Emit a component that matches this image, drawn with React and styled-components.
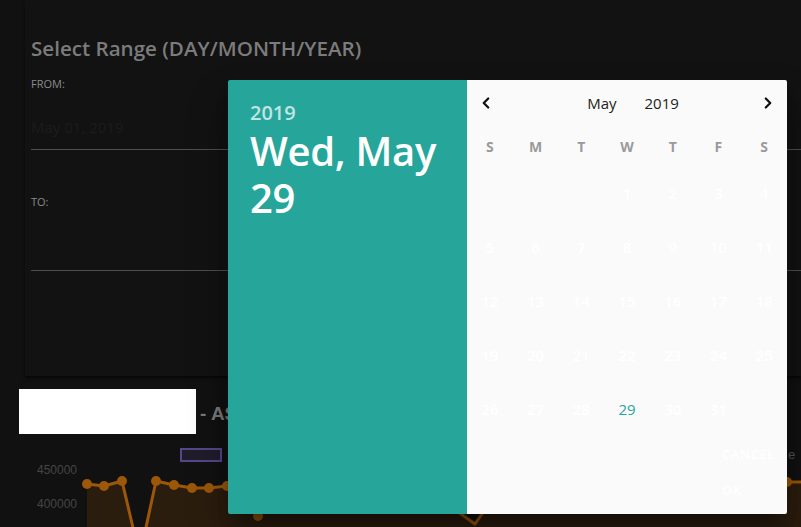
import React from 'react'
import styled, { createGlobalStyle } from 'styled-components'
import { ChevronLeft, ChevronRight } from 'lucide-react'

const font = `"Open Sans", "Noto Sans", sans-serif`

const GlobalStyle = createGlobalStyle`
  html, body {
    margin: 0;
    padding: 0;
    background: #111111;
    overflow: hidden;
  }
  body {
    font-family: ${font};
    width: 801px;
    height: 527px;
  }
`

const Page = styled.div`
  position: relative;
  width: 801px;
  height: 527px;
  overflow: hidden;
  background: #111111;
`

const FormCard = styled.section`
  margin-left: 25px;
  height: 376px;
  box-sizing: border-box;
  padding: 35px 0 0 6px;
  background: #121212;
  box-shadow: 0 2px 3px rgba(0, 0, 0, 0.6);
`

const Title = styled.h2`
  margin: 0 0 16px;
  font-size: 20.6px;
  line-height: 26px;
  font-weight: 600;
  color: #7c7c7c;
`

const Field = styled.div`
  display: flex;
  flex-direction: column;
  margin-bottom: ${({ gap }) => gap}px;
`

const Label = styled.label`
  font-size: 11px;
  line-height: 14px;
  color: #8a8a8a;
`

const Input = styled.div`
  height: ${({ h }) => h}px;
  box-sizing: border-box;
  display: flex;
  align-items: flex-end;
  padding-bottom: 12px;
  font-size: 15px;
  color: #1c1c1c;
  border-bottom: 1px solid #4e4e4e;
`

const ChartSection = styled.section`
  display: flex;
  flex-direction: column;
  padding-top: 13px;
`

const ChartHeading = styled.div`
  display: flex;
  align-items: center;
  gap: 4px;
  padding-left: 19px;
`

const Redacted = styled.div`
  width: 177px;
  height: 45px;
  background: #ffffff;
`

const HeadingText = styled.span`
  font-family: "Liberation Sans", Arial, sans-serif;
  font-weight: 700;
  font-size: 19px;
  color: #7a7a7a;
  padding-top: 4px;
`

const ChartSvg = styled.svg`
  display: block;
  margin-top: 6px;
`

const Dialog = styled.div`
  position: absolute;
  top: 80px;
  left: 228px;
  width: 559px;
  height: 434px;
  display: flex;
  border-radius: 2px;
  overflow: hidden;
  box-shadow: 0 11px 15px -7px rgba(0, 0, 0, 0.4), 0 24px 38px 3px rgba(0, 0, 0, 0.3);
`

const Toolbar = styled.div`
  width: 239px;
  background: #26a69a;
  box-sizing: border-box;
  padding: 19px 22px;
  display: flex;
  flex-direction: column;
`

const ToolbarYear = styled.div`
  font-size: 20px;
  line-height: 28px;
  font-weight: 600;
  color: rgba(255, 255, 255, 0.72);
`

const ToolbarDate = styled.div`
  font-size: 40px;
  line-height: 47px;
  font-weight: 600;
  color: #ffffff;
  letter-spacing: -0.3px;
`

const CalendarPanel = styled.div`
  width: 320px;
  background: #fafafa;
  display: flex;
  flex-direction: column;
`

const Header = styled.div`
  display: flex;
  align-items: center;
  justify-content: space-between;
  height: 30px;
  margin-top: 8px;
  padding: 0 10px 0 10px;
`

const ArrowButton = styled.button`
  border: 0;
  background: none;
  padding: 0;
  width: 18px;
  height: 18px;
  display: flex;
  align-items: center;
  justify-content: center;
  color: #111;
`

const MonthLabel = styled.div`
  display: flex;
  gap: 28px;
  font-size: 15px;
  color: #222;
  padding-left: 12px;
`

const Grid = styled.div`
  display: grid;
  grid-template-columns: repeat(7, 1fr);
`

const WeekDay = styled.div`
  height: 32px;
  margin: 12px 0 4px;
  display: flex;
  align-items: center;
  justify-content: center;
  font-size: 14px;
  font-weight: 700;
  color: #9a9a9a;
`

const Day = styled.div`
  height: 54px;
  display: flex;
  align-items: center;
  justify-content: center;
  font-size: 15px;
  font-weight: ${({ selected }) => (selected ? 400 : 600)};
  color: ${({ selected }) => (selected ? '#26a69a' : '#ffffff')};
`

const Actions = styled.div`
  display: flex;
  flex-direction: column;
  align-items: flex-start;
  gap: 18px;
  padding: 9px 0 0 255px;
`

const ActionButton = styled.button`
  border: 0;
  background: none;
  padding: 0;
  font-family: ${font};
  font-size: 13px;
  font-weight: 600;
  letter-spacing: 0.6px;
  color: #ffffff;
`

const weekDays = ['S', 'M', 'T', 'W', 'T', 'F', 'S']

const days = [
  ...Array(3).fill(null),
  ...Array.from({ length: 31 }, (_, i) => i + 1),
]

const linePoints = [
  [87, 44], [104, 46], [122, 41], [134, 92], [145, 92], [156, 41],
  [174, 45], [192, 48], [209, 48], [227, 46], [245, 48], [258, 76],
  [280, 50], [320, 47], [380, 49], [430, 52], [475, 84], [500, 48],
  [560, 46], [620, 45], [680, 44], [740, 43], [787, 42], [801, 42],
]

const Chart = () => {
  const line = linePoints.map(p => p.join(',')).join(' ')
  const area = `87,110 ${line} 801,110`
  return (
    <ChartSvg width="801" height="110" viewBox="0 0 801 110">
      <rect x="181" y="9" width="40" height="12" fill="#201d2b" stroke="#56478a" strokeWidth="2" />
      <text x="788" y="19" fill="#555" fontSize="13" fontFamily="Liberation Sans, Arial, sans-serif">e</text>
      <text x="37" y="34" fill="#454545" fontSize="12" fontFamily="Liberation Sans, Arial, sans-serif">450000</text>
      <text x="37" y="68" fill="#454545" fontSize="12" fontFamily="Liberation Sans, Arial, sans-serif">400000</text>
      <polygon points={area} fill="#2b1d0e" />
      <polyline points={line} fill="none" stroke="#9c5708" strokeWidth="3" strokeLinejoin="round" />
      {linePoints
        .filter(([x, y]) => y < 80 && x < 790)
        .map(([x, y]) => (
          <circle key={x} cx={x} cy={y} r="5" fill="#9c5708" />
        ))}
    </ChartSvg>
  )
}

export default function App() {
  return (
    <Page>
      <GlobalStyle />
      <FormCard>
        <Title>Select Range (DAY/MONTH/YEAR)</Title>
        <Field gap={45}>
          <Label>FROM:</Label>
          <Input h={59}>May 01, 2019</Input>
        </Field>
        <Field gap={0}>
          <Label>TO:</Label>
          <Input h={62} />
        </Field>
      </FormCard>
      <ChartSection>
        <ChartHeading>
          <Redacted />
          <HeadingText>- AS</HeadingText>
        </ChartHeading>
        <Chart />
      </ChartSection>

      <Dialog>
        <Toolbar>
          <ToolbarYear>2019</ToolbarYear>
          <ToolbarDate>
            Wed, May
            <br />
            29
          </ToolbarDate>
        </Toolbar>
        <CalendarPanel>
          <Header>
            <ArrowButton>
              <ChevronLeft size={18} strokeWidth={3} />
            </ArrowButton>
            <MonthLabel>
              <span>May</span>
              <span>2019</span>
            </MonthLabel>
            <ArrowButton>
              <ChevronRight size={18} strokeWidth={3} />
            </ArrowButton>
          </Header>
          <Grid>
            {weekDays.map((d, i) => (
              <WeekDay key={i}>{d}</WeekDay>
            ))}
            {days.map((d, i) => (
              <Day key={i} selected={d === 29}>
                {d}
              </Day>
            ))}
          </Grid>
          <Actions>
            <ActionButton>CANCEL</ActionButton>
            <ActionButton>OK</ActionButton>
          </Actions>
        </CalendarPanel>
      </Dialog>
    </Page>
  )
}
